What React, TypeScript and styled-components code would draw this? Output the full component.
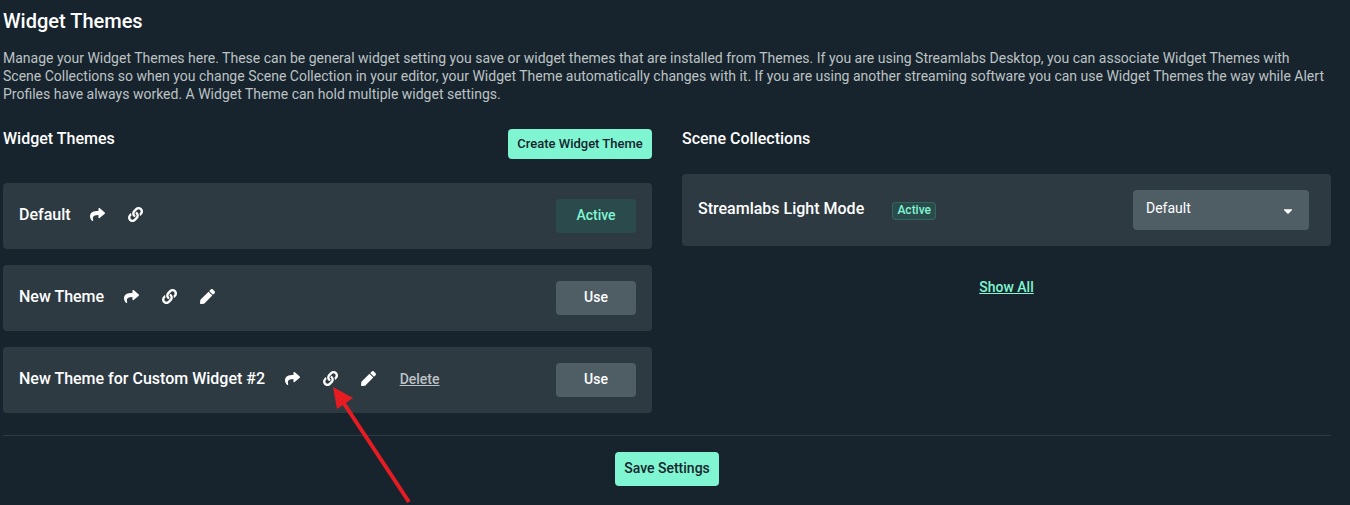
import React from "react";
import styled, { createGlobalStyle } from "styled-components";
import { FaShare, FaLink, FaPen, FaCaretDown } from "react-icons/fa";

const GlobalStyle = createGlobalStyle`
  html, body {
    margin: 0;
    padding: 0;
    background: #17242d;
    overflow: hidden;
  }
  body {
    font-family: Roboto, "Liberation Sans", sans-serif;
  }
`;

const Page = styled.main`
  position: relative;
  width: 1350px;
  height: 505px;
  box-sizing: border-box;
  padding: 10px 19px 0 3px;
  color: #bdc2c4;
`;

const Title = styled.h1`
  margin: 0;
  font-size: 20px;
  line-height: 22px;
  font-weight: 500;
  color: #fff;
`;

const Intro = styled.p`
  margin: 17px 0 0;
  font-size: 14px;
  line-height: 18px;
  font-weight: 400;
  color: #bdc2c4;
`;

const Columns = styled.div`
  display: grid;
  grid-template-columns: 649px 649px;
  gap: 30px;
  margin-top: 26px;
`;

const Column = styled.section`
  display: flex;
  flex-direction: column;
`;

const ColumnHead = styled.div`
  display: flex;
  justify-content: space-between;
  align-items: flex-start;
  height: 45px;
`;

const ColumnTitle = styled.h2`
  margin: 0;
  font-size: 16px;
  line-height: 20px;
  font-weight: 500;
  color: #fff;
`;

const MintButton = styled.button<{ $large?: boolean }>`
  border: none;
  border-radius: 4px;
  background: #80f5d2;
  color: #17242d;
  font-family: inherit;
  font-weight: 500;
  font-size: ${(p) => (p.$large ? "14px" : "13px")};
  height: ${(p) => (p.$large ? "34px" : "30px")};
  padding: 0 0 2px;
  width: ${(p) => (p.$large ? "104px" : "144px")};
  cursor: pointer;
`;

const ThemeList = styled.div`
  display: flex;
  flex-direction: column;
  gap: 16px;
  margin-top: 9px;
`;

const Card = styled.div<{ $tall?: boolean }>`
  display: flex;
  align-items: center;
  height: ${(p) => (p.$tall ? "72px" : "66px")};
  box-sizing: border-box;
  padding: 0 ${(p) => (p.$tall ? "22px" : "16px")} 0 16px;
  border-radius: 4px;
  background: #2e3a42;
`;

const CardName = styled.span`
  font-size: 16px;
  font-weight: 500;
  color: #fff;
  margin-top: -3px;
`;

const Actions = styled.div`
  display: flex;
  align-items: center;
  gap: 23px;
  margin-left: 19.6px;
  margin-top: -3px;
  color: #fff;

  svg {
    display: block;
    width: 15px;
    height: 15px;
  }
`;

const DeleteLink = styled.a`
  font-size: 14px;
  font-weight: 500;
  color: #bdc2c4;
  text-decoration: underline;
  margin-left: 1px;
  margin-top: 1px;
`;

const StateButton = styled.button<{ $active?: boolean }>`
  margin-left: auto;
  width: 80px;
  height: 34px;
  border: none;
  border-radius: 4px;
  padding: 0 0 2px;
  font-family: inherit;
  font-size: 14px;
  font-weight: 500;
  background: ${(p) => (p.$active ? "#2b4a4c" : "#4f5e65")};
  color: ${(p) => (p.$active ? "#80f5d2" : "#fff")};
  cursor: pointer;
`;

const ActiveTag = styled.span`
  margin-left: 28px;
  margin-top: 2px;
  box-sizing: border-box;
  height: 18px;
  width: 44px;
  line-height: 15px;
  text-align: center;
  font-size: 12px;
  font-weight: 500;
  color: #80f5d2;
  background: #2b4a4c;
  border: 1px solid #31675f;
  border-radius: 3px;
`;

const SelectBox = styled.div`
  margin-left: auto;
  width: 176px;
  height: 40px;
  box-sizing: border-box;
  padding: 0 14px 0 13px;
  display: flex;
  align-items: center;
  justify-content: space-between;
  border-radius: 4px;
  background: #4f5e65;
  color: #fff;
  font-size: 14px;

  span {
    margin-top: -4px;
  }

  svg {
    width: 14px;
    height: 14px;
    margin-top: 1px;
  }
`;

const ShowAll = styled.a`
  align-self: center;
  margin-top: 32px;
  font-size: 14px;
  line-height: 18px;
  font-weight: 500;
  color: #80f5d2;
  text-decoration: underline;
`;

const Divider = styled.hr`
  margin: 22px 0 0;
  width: 1328px;
  border: none;
  border-top: 1px solid #2e3a42;
`;

const Footer = styled.div`
  display: flex;
  justify-content: center;
  width: 1328px;
  margin-top: 16px;
`;

const ArrowOverlay = styled.svg`
  position: absolute;
  left: 0;
  top: 0;
  width: 1350px;
  height: 505px;
  pointer-events: none;
`;

const themes = [
  { name: "Default", active: true },
  { name: "New Theme", edit: true },
  { name: "New Theme for Custom Widget #2", edit: true, del: true },
];

export default function App() {
  return (
    <Page>
      <GlobalStyle />
      <Title>Widget Themes</Title>
      <Intro>
        Manage your Widget Themes here. These can be general widget setting you save or widget themes that are installed from Themes. If you are using Streamlabs Desktop, you can associate Widget Themes with
        <br />
        Scene Collections so when you change Scene Collection in your editor, your Widget Theme automatically changes with it. If you are using another streaming software you can use Widget Themes the way while Alert
        <br />
        Profiles have always worked. A Widget Theme can hold multiple widget settings.
      </Intro>
      <Columns>
        <Column>
          <ColumnHead>
            <ColumnTitle>Widget Themes</ColumnTitle>
            <MintButton>Create Widget Theme</MintButton>
          </ColumnHead>
          <ThemeList>
            {themes.map((t) => (
              <Card key={t.name}>
                <CardName>{t.name}</CardName>
                <Actions>
                  <FaShare />
                  <FaLink />
                  {t.edit && <FaPen />}
                  {t.del && <DeleteLink>Delete</DeleteLink>}
                </Actions>
                <StateButton $active={t.active}>{t.active ? "Active" : "Use"}</StateButton>
              </Card>
            ))}
          </ThemeList>
        </Column>
        <Column>
          <ColumnHead>
            <ColumnTitle>Scene Collections</ColumnTitle>
          </ColumnHead>
          <Card $tall>
            <CardName>Streamlabs Light Mode</CardName>
            <ActiveTag>Active</ActiveTag>
            <SelectBox>
              <span>Default</span>
              <FaCaretDown />
            </SelectBox>
          </Card>
          <ShowAll>Show All</ShowAll>
        </Column>
      </Columns>
      <Divider />
      <Footer>
        <MintButton $large>Save Settings</MintButton>
      </Footer>
      <ArrowOverlay viewBox="0 0 1350 505">
        <line x1="409" y1="502" x2="343" y2="402" stroke="#e71c23" strokeWidth="4" />
        <polygon points="333,387 337,409 353,398" fill="#e71c23" />
      </ArrowOverlay>
    </Page>
  );
}
